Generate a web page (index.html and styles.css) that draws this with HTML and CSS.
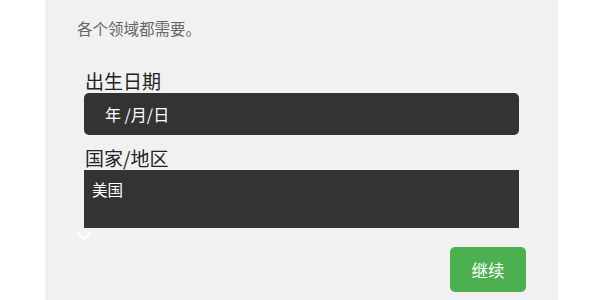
FILE: index.html
```html
<!DOCTYPE html>
<html lang="zh">
<head>
<meta charset="utf-8">
<link rel="stylesheet" href="styles.css">
</head>
<body>
<div class="panel">
  <p class="intro">各个领域都需要。</p>
  <div class="form">
    <label class="label label-first">出生日期</label>
    <div class="date-input">年 /月/日</div>
    <label class="label label-second">国家/地区</label>
    <div class="select">美国</div>
    <div class="chevron-row">
      <svg class="chevron" width="16" height="10" viewBox="0 0 16 10"><path d="M1.5 1.5 L8 8 L14.5 1.5" fill="none" stroke="#ffffff" stroke-width="2.6"/></svg>
    </div>
    <div class="actions">
      <button class="btn">继续</button>
    </div>
  </div>
</div>
</body>
</html>
```
FILE: styles.css
```css
html, body {
  margin: 0;
  padding: 0;
  background: #ffffff;
  font-family: "Noto Sans CJK SC", "Noto Sans", sans-serif;
}
.panel {
  width: 513px;
  height: 300px;
  margin-left: 45px;
  background: #f1f1f1;
  box-sizing: border-box;
  padding-top: 18px;
  overflow: hidden;
}
.intro {
  margin: 0 0 0 32px;
  font-size: 15.5px;
  line-height: 20px;
  height: 20px;
  color: #666666;
}
.form {
  margin-left: 39px;
  margin-right: 32px;
}
.label {
  display: block;
  font-size: 19px;
  line-height: 25px;
  height: 25px;
  color: #222222;
  padding-left: 1px;
}
.label-first {
  margin-top: 30px;
}
.label-second {
  margin-top: 10px;
}
.date-input {
  width: 435px;
  height: 42px;
  background: #333333;
  border-radius: 5px;
  color: #ffffff;
  font-size: 16px;
  line-height: 42px;
  padding-left: 21px;
  box-sizing: border-box;
}
.select {
  width: 435px;
  height: 58px;
  background: #333333;
  color: #ffffff;
  font-size: 15.5px;
  line-height: 24px;
  padding: 7px 0 0 8px;
  box-sizing: border-box;
}
.chevron-row {
  height: 19px;
  margin-left: -8px;
  display: flex;
  align-items: flex-start;
  padding-top: 3px;
  box-sizing: border-box;
}
.actions {
  display: flex;
  justify-content: flex-end;
}
.btn {
  width: 76px;
  height: 45px;
  border: none;
  border-radius: 5px;
  background: #4caf50;
  color: #ffffff;
  font-family: "Noto Sans CJK SC", "Noto Sans", sans-serif;
  font-size: 16.5px;
  padding: 0;
}
```
